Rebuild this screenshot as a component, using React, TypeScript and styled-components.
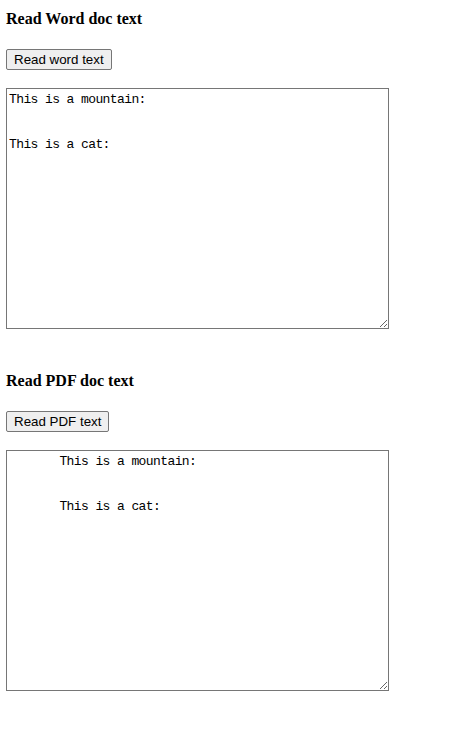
import React from "react";
import styled, { createGlobalStyle } from "styled-components";

const GlobalStyle = createGlobalStyle`
  html, body {
    margin: 0;
    padding: 0;
    background: #ffffff;
  }
`;

const Page = styled.div`
  display: flex;
  flex-direction: column;
  align-items: flex-start;
  padding: 10px 6px 40px;
`;

const Section = styled.section<{ $gap?: number }>`
  display: flex;
  flex-direction: column;
  align-items: flex-start;
  margin-top: ${(p) => p.$gap ?? 0}px;
`;

const Heading = styled.h4`
  margin: 0 0 21px;
  font-family: "Liberation Serif", "Times New Roman", serif;
  font-size: 16px;
  line-height: 18px;
  font-weight: bold;
  color: #000;
`;

const ReadButton = styled.button`
  box-sizing: border-box;
  height: 21px;
  margin: 0 0 18px;
  padding: 1px 7px;
  font-family: "Liberation Sans", Arial, sans-serif;
  font-size: 13.33px;
  line-height: 15px;
  color: #000;
  background: #efefef;
  border: 1px solid #767676;
  border-radius: 2px;
  cursor: pointer;
`;

const Output = styled.textarea`
  box-sizing: border-box;
  width: 383px;
  height: 241px;
  margin: 0;
  padding: 3px 2px 2px;
  font-family: "Liberation Mono", "Courier New", monospace;
  font-size: 13px;
  letter-spacing: -0.6px;
  line-height: 15px;
  color: #000;
  background: #fff;
  border: 1px solid #767676;
  border-radius: 0;
  white-space: pre;
  overflow: auto;
`;

const wordText = "This is a mountain:\n\n\nThis is a cat:";
const pdfText = "       This is a mountain:\n\n\n       This is a cat:";

export default function App() {
  return (
    <>
      <GlobalStyle />
      <Page>
        <Section>
          <Heading>Read Word doc text</Heading>
          <ReadButton type="button">Read word text</ReadButton>
          <Output readOnly defaultValue={wordText} />
        </Section>
        <Section $gap={43}>
          <Heading>Read PDF doc text</Heading>
          <ReadButton type="button">Read PDF text</ReadButton>
          <Output readOnly defaultValue={pdfText} />
        </Section>
      </Page>
    </>
  );
}
